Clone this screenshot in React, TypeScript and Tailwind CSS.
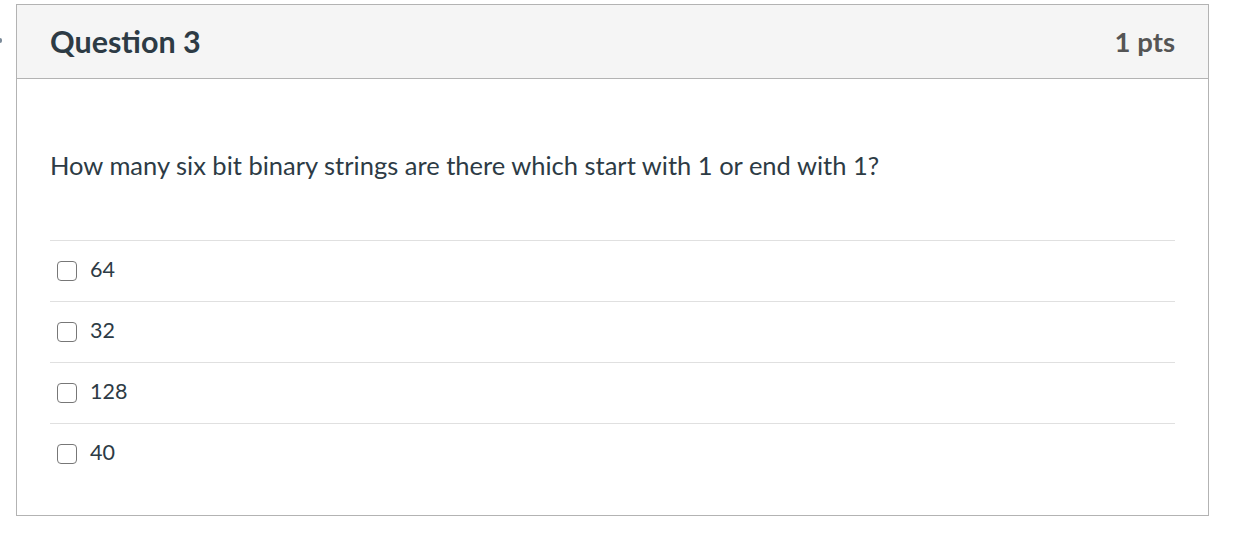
export default function App() {
  const answers = ["64", "32", "128", "40"];

  return (
    <div className="relative min-h-screen bg-white pt-[4px] pl-[16px] text-[#2d3b45]" style={{ fontFamily: "Lato, 'Open Sans', sans-serif" }}>
      <div className="absolute left-0 top-[38px] h-[5px] w-[2px] rounded-r-full bg-[#7a8a99]" />
      <div className="w-[1193px] border border-[#b3b3b3]">
        <div className="flex h-[74px] items-center justify-between border-b border-[#b3b3b3] bg-[#f5f5f5] pl-[33px] pr-[33px]">
          <h2 className="text-[30.5px] font-bold text-[#2d3b45]">Question 3</h2>
          <div className="text-[27.5px] font-bold text-[#555]">1 pts</div>
        </div>
        <div className="px-[33px] pb-[31px]">
          <p className="pt-[71px] pb-[60px] text-[25.5px] leading-[30px]">
            How many six bit binary strings are there which start with 1 or end with 1?
          </p>
          <div>
            {answers.map((a) => (
              <label key={a} className="flex h-[61px] items-center border-t border-[#e0e0e0] pl-[7px]">
                <span className="mr-[13px] block h-[20px] w-[20px] rounded-[4px] border-[1.5px] border-[#777] bg-white" />
                <span className="-mt-[3px] text-[21.5px]">{a}</span>
              </label>
            ))}
          </div>
        </div>
      </div>
    </div>
  );
}
